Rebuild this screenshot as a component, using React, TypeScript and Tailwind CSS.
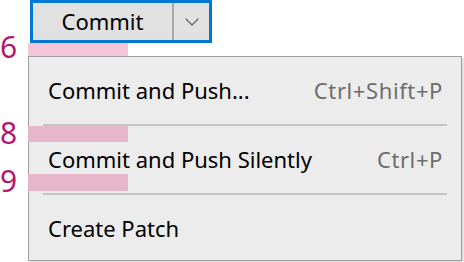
import { ChevronDown } from 'lucide-react';

const ITEMS = [
  { label: 'Commit and Push...', shortcut: 'Ctrl+Shift+P' },
  { label: 'Commit and Push Silently', shortcut: 'Ctrl+P' },
  { label: 'Create Patch', shortcut: '' },
];

export default function App() {
  return (
    <div
      className="relative w-[464px] h-[262px] bg-white overflow-hidden"
      style={{ fontFamily: '"Noto Sans", "Open Sans", sans-serif' }}
    >
      {/* split button */}
      <div className="ml-[30px] flex w-[182px] h-[43px] border-[3px] border-[#0078d7] bg-[#e1e1e1]">
        <div className="flex-1 flex items-center justify-center text-[22px] text-black border-r-2 border-[#a8a8a8]">
          Commit
        </div>
        <div className="w-[35px] flex items-center justify-center">
          <ChevronDown size={24} strokeWidth={1.3} className="text-[#666]" />
        </div>
      </div>

      {/* dropdown menu */}
      <div className="ml-[28px] mt-[13px] w-[434px] h-[205px] border border-[#a0a0a0] bg-[#ececec] shadow-[2px_2px_2px_rgba(0,0,0,0.15)] flex flex-col">
        {ITEMS.map((item, i) => (
          <div key={item.label} className="flex flex-col">
            {i > 0 && <div className="mx-[14px] h-[2px] bg-[#c4c4c4]" />}
            <div className="h-[67px] flex items-center justify-between pl-[19px] pr-[18px] text-[22px]">
              <span className="text-black">{item.label}</span>
              <span className="text-[#6d6d6d] tracking-[0.6px]">{item.shortcut}</span>
            </div>
          </div>
        ))}
      </div>

      {/* annotation overlays */}
      <div className="absolute left-[28px] top-[43px] w-[100px] h-[13px] bg-[#f4c6d7]" />
      <div className="absolute left-[28px] top-[126px] w-[100px] h-[16px] bg-[#e6b6ca]" />
      <div className="absolute left-[28px] top-[174px] w-[100px] h-[17px] bg-[#e6b6ca]" />
      <span className="absolute left-[0px] top-[32px] text-[30px] leading-none text-[#b3186e]">6</span>
      <span className="absolute left-[0px] top-[118px] text-[30px] leading-none text-[#b3186e]">8</span>
      <span className="absolute left-[0px] top-[166px] text-[30px] leading-none text-[#b3186e]">9</span>
    </div>
  );
}
